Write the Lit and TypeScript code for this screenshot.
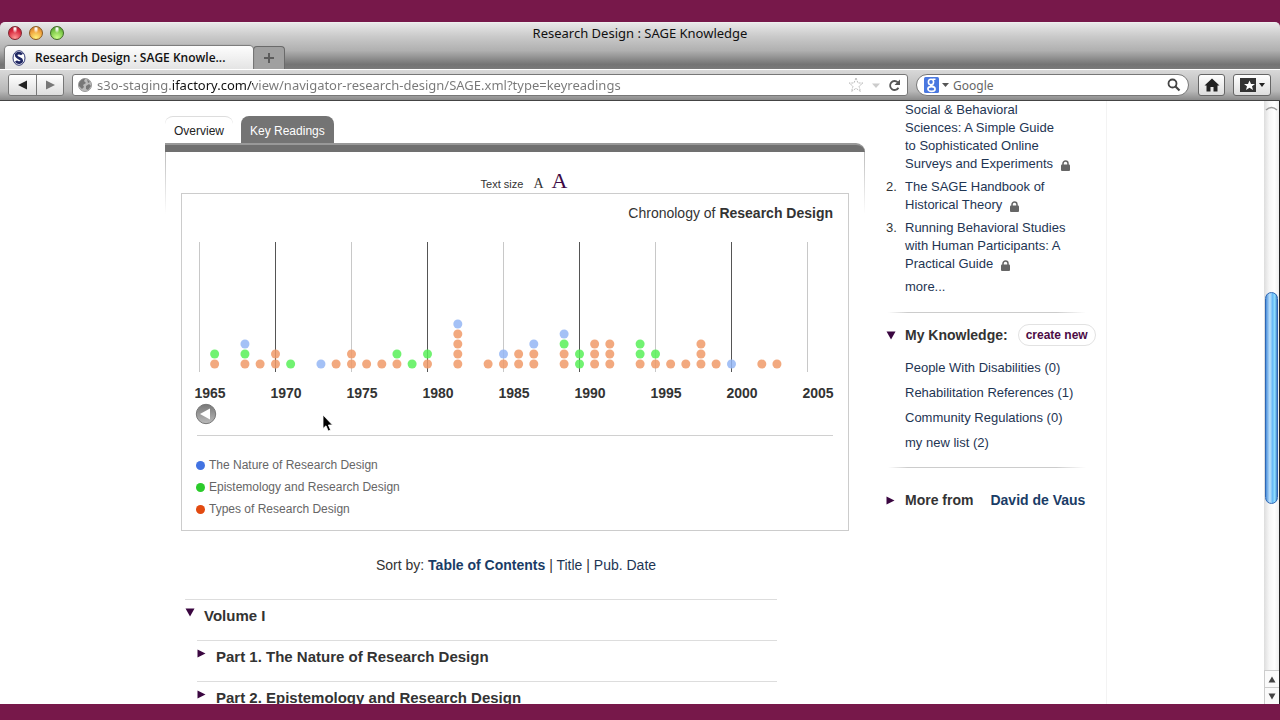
import { LitElement, html, svg, css } from "lit";
import { customElement } from "lit/decorators.js";

type Series = "nature" | "epistemology" | "types";

const CODES: Record<string, Series> = { B: "nature", G: "epistemology", O: "types" };

// One entry per year; letters are stacked from the axis upwards.
const READINGS: [number, string][] = [
  [1966, "OG"], [1968, "OGB"], [1969, "O"], [1970, "OO"], [1971, "G"], [1973, "B"],
  [1974, "O"], [1975, "OO"], [1976, "O"], [1977, "O"], [1978, "OG"], [1979, "G"],
  [1980, "OG"], [1982, "OOOOB"], [1984, "O"], [1985, "OB"], [1986, "OO"], [1987, "OOB"],
  [1989, "OOGB"], [1990, "GG"], [1991, "OOO"], [1992, "OOO"], [1994, "OGG"], [1995, "OG"],
  [1996, "O"], [1997, "O"], [1998, "OOO"], [1999, "O"], [2000, "B"], [2002, "O"], [2003, "O"],
];

const YEARS = [1965, 1970, 1975, 1980, 1985, 1990, 1995, 2000, 2005];
const xOf = (year: number) => 2.5 + (year - 1965) * 15.15 + Math.floor((year - 1965) / 5) * 0.25;

@customElement("chronology-chart")
export class ChronologyChart extends LitElement {
  static styles = css`
    :host { display: block; border: 1px solid #ccc; padding: 11px 15px 10px; font-size: 14px; color: #333; }
    .title { margin: 0; font-size: 14px; line-height: 16px; font-weight: normal; text-align: right; }
    .plot { display: block; width: 100%; margin-top: 21px; overflow: visible; }
    .tick { stroke: #c8c8c8; }
    .decade { stroke: #555; }
    .year { font: bold 14px "Liberation Sans", Arial, sans-serif; fill: #333; }
    .nature { fill: #94b6f4; background: #4273e2; }
    .epistemology { fill: #58f058; background: #2bcb2b; }
    .types { fill: #f09a68; background: #e24a10; }
    .dot { opacity: 0.85; }
    .prev { display: block; width: 22px; height: 22px; margin: 1px 0 10px -2px; padding: 0; border: 0; background: none; }
    .legend { list-style: none; margin: 0; padding: 18px 0 0; border-top: 1px solid #d0d0d0; color: #666; font-size: 12px; line-height: 22px; }
    .entry { display: flex; align-items: center; gap: 4px; }
    .swatch { width: 9px; height: 9px; border-radius: 50%; margin-left: -1px; }
  `;

  render() {
    return html`
      <h2 class="title">Chronology of <b>Research Design</b></h2>
      <svg class="plot" viewBox="0 0 636 160" role="img" aria-label="Readings by year">
        ${YEARS.map((y) => svg`<line class=${y % 10 ? "tick" : "decade"} x1=${xOf(y)} x2=${xOf(y)} y1="0" y2="130"/>
          <text class="year" x=${xOf(y) - 5} y="156">${y}</text>`)}
        ${READINGS.map(([y, stack]) =>
          [...stack].map((c, i) => svg`<circle class="dot ${CODES[c]}" cx=${xOf(y)} cy=${122 - i * 10} r="4.5"/>`))}
      </svg>
      <button class="prev" aria-label="Earlier years">
        <svg width="22" height="22" viewBox="0 0 22 22">
          <defs><linearGradient id="g" x2="0" y2="1"><stop stop-color="#777"/><stop offset="1" stop-color="#bbb"/></linearGradient></defs>
          <circle cx="11" cy="11" r="9.7" fill="url(#g)" stroke="#777"/>
          <path d="M5 11 15 5.5V16.5Z" fill="#fff"/>
        </svg>
      </button>
      <ul class="legend">
        <li class="entry"><span class="swatch nature"></span>The Nature of Research Design</li>
        <li class="entry"><span class="swatch epistemology"></span>Epistemology and Research Design</li>
        <li class="entry"><span class="swatch types"></span>Types of Research Design</li>
      </ul>
    `;
  }
}

@customElement("browser-chrome")
export class BrowserChrome extends LitElement {
  static styles = css`
    :host { display: block; font-family: "Noto Sans", "Open Sans", sans-serif; color: #111; }
    .top { background: linear-gradient(#e8e8e8, #c9c9c9 30%, #b0b0b0 60%, #888 80%, #747474 90%, #7a7a7a); border-radius: 5px 5px 0 0; border-top: 1px solid #eee; box-sizing: border-box; }
    .titlebar { display: grid; grid-template-columns: 1fr auto 1fr; align-items: start; height: 23px; padding: 0 8px; box-sizing: border-box; }
    .lights { display: flex; gap: 7px; padding-top: 3px; }
    .light { width: 14px; height: 14px; padding: 0; border: 1px solid #555; border-radius: 50%; }
    .close { border-color: #7d2530; background: radial-gradient(ellipse at 50% 15%, #fff 5%, transparent 30%), radial-gradient(circle at 50% 90%, #ff9a96, #d8283e 60%, #a01828); }
    .min { border-color: #8a5a20; background: radial-gradient(ellipse at 50% 15%, #fff 5%, transparent 30%), radial-gradient(circle at 50% 90%, #fff27a, #efa03c 60%, #b06a20); }
    .max { border-color: #3e6a24; background: radial-gradient(ellipse at 50% 15%, #fff 5%, transparent 30%), radial-gradient(circle at 50% 90%, #ccff8a, #7cc848 60%, #3f8428); }
    .title { font-size: 13px; line-height: 20px; }
    .tabs { display: flex; height: 23px; padding-left: 5px; }
    .tab { display: flex; align-items: center; gap: 9px; width: 248px; box-sizing: border-box; padding: 0 8px 0 7px; border: 0; border-radius: 4px 4px 0 0; background: linear-gradient(#fdfdfd, #e4e4e4); font: 600 12px "Open Sans", "Noto Sans", sans-serif; color: #111; box-shadow: 0 0 1px 1px #777; clip-path: inset(-2px -2px 0 -2px); white-space: nowrap; }
    .new { display: flex; align-items: center; justify-content: center; width: 32px; padding: 0; border: 1px solid #6a6a6a; border-bottom: 0; border-radius: 4px 4px 0 0; background: #a0a0a0; }
    .toolbar { display: flex; align-items: center; height: 32px; box-sizing: border-box; padding: 0 9px 0 8px; border-top: 1px solid #fff; border-bottom: 1px solid #444; background: linear-gradient(#d8d8d8, #b8b8b8 70%, #8a8a8a); }
    .group { display: flex; border: 1px solid #777; border-radius: 3px; overflow: hidden; }
    .nav, .tool { display: flex; align-items: center; justify-content: center; gap: 3px; height: 20px; padding: 0; border: 0; background: linear-gradient(#fff, #ddd); }
    .nav { width: 27px; }
    .nav + .nav { border-left: 1px solid #777; }
    .tool { width: 27px; height: 22px; border: 1px solid #666; border-radius: 3px; margin-left: 9px; }
    .wide { width: 38px; margin-left: 8px; }
    .field { display: flex; align-items: center; box-sizing: border-box; height: 22px; background: #fff; border: 1px solid #777; }
    .address { flex: 1; margin-left: 8px; padding: 0 6px 0 5px; border-radius: 3px; gap: 5px; }
    .search { width: 273px; margin-left: 8px; padding: 0 7px; border-radius: 11px; gap: 3px; }
    .icon { display: flex; padding: 0; border: 0; background: none; }
    .input { flex: 1; min-width: 0; height: 20px; padding: 0; border: 0; outline: 0; font: 12px "Noto Sans", sans-serif; color: #666; background: none; }
    .input::placeholder { color: #666; opacity: 1; }
    .url { font-size: 13px; color: transparent; background: linear-gradient(90deg, #777 75px, #111 75px 156px, #777 156px); -webkit-background-clip: text; background-clip: text; }
    .hint { margin-left: 3px; }
  `;

  render() {
    return html`
      <header>
        <div class="top">
          <div class="titlebar">
            <div class="lights">
              <button class="light close" aria-label="Close"></button>
              <button class="light min" aria-label="Minimise"></button>
              <button class="light max" aria-label="Zoom"></button>
            </div>
            <div class="title">Research Design : SAGE Knowledge</div>
          </div>
          <div class="tabs">
            <button class="tab">
              <svg width="14" height="16" viewBox="0 0 14 16"><ellipse cx="7" cy="8" rx="6" ry="7.3" fill="#fff" stroke="#2b3370" /><path d="M10 4.5C8.5 2.5 4 2.6 4.2 5.5S9.8 8 9.8 10.5 5.500 13.500 4 11" fill="none" stroke="#1f2763" stroke-width="2.6"/></svg>
              Research Design : SAGE Knowle...
            </button>
            <button class="new" aria-label="New tab"><svg width="12" height="12" viewBox="0 0 12 12"><path d="M6 1V11M1 6H11" stroke="#5c5c5c" stroke-width="2"/></svg></button>
          </div>
        </div>
        <div class="toolbar">
          <div class="group">
            <button class="nav" aria-label="Back"><svg width="10" height="10" viewBox="0 0 10 10"><path d="M0 5 9 .5V9.500Z" fill="#222"/></svg></button>
            <button class="nav" aria-label="Forward"><svg width="10" height="10" viewBox="0 0 10 10"><path d="M10 5 1 .5V9.500Z" fill="#777"/></svg></button>
          </div>
          <div class="field address">
            <svg width="14" height="14" viewBox="0 0 14 14"><circle cx="7" cy="7" r="6.500" fill="#bbb" stroke="#999"/><path d="M1 5C3 1 6 .5 7 1L6 3 8 5 5 7 6 9 4 11 1 8ZM8 8 11 6 13 8 10 12 8 11ZM9 1 12 4 10 5Z" fill="#777"/></svg>
            <input class="input url" aria-label="Address" value="s3o-staging.ifactory.com/view/navigator-research-design/SAGE.xml?type=keyreadings" />
            <button class="icon" aria-label="Bookmark"><svg width="16" height="16" viewBox="0 0 16 16"><path d="M8 1 10 6H15L11 9.200 12.500 14.500 8 11.300 3.500 14.500 5 9.200 1 6H6Z" fill="#fff" stroke="#bbb" stroke-dasharray="2 1"/></svg></button>
            <button class="icon hint" aria-label="History"><svg width="8" height="5" viewBox="0 0 8 5"><path d="M0 .5H8L4 5Z" fill="#ccc"/></svg></button>
            <button class="icon hint" aria-label="Reload"><svg width="13" height="13" viewBox="0 0 13 13"><path d="M9.800 3.300A4.500 4.500 0 1 0 10.500 8.800" fill="none" stroke="#555" stroke-width="1.800"/><path d="M12 .5V6H6.500Z" fill="#555"/></svg></button>
          </div>
          <div class="field search">
            <button class="icon" aria-label="Search engine"><svg width="26" height="16" viewBox="0 0 26 16"><rect width="15" height="16" rx="1.500" fill="#4a78e0"/><g fill="none" stroke="#fff" stroke-width="1.600"><ellipse cx="7" cy="5" rx="2.600" ry="2.700"/><ellipse cx="7.500" cy="12" rx="3.600" ry="2.400"/><path d="M8.500 2.300H11.500M7.500 7.500C5 9 10 9 9.500 10"/></g><path d="M18 6H25L21.500 10Z" fill="#555"/></svg></button>
            <input class="input" type="text" aria-label="Search" placeholder="Google" />
            <button class="icon" aria-label="Search"><svg width="14" height="14" viewBox="0 0 14 14"><circle cx="5.500" cy="5.500" r="4" fill="none" stroke="#444" stroke-width="1.800"/><path d="M8.500 8.500 12.500 12.500" stroke="#444" stroke-width="2.200"/></svg></button>
          </div>
          <button class="tool" aria-label="Home"><svg width="16" height="14" viewBox="0 0 16 14"><path d="M8 .5 15.500 7.500H13.500V13.500H9.500V9H6.500V13.500H2.500V7.500H.5Z" fill="#222"/></svg></button>
          <button class="tool wide" aria-label="Bookmarks"><svg width="16" height="14" viewBox="0 0 16 14"><path d="M0 0H16V14H0Z" fill="#333"/><path d="M9.500 2.500 11 6H15L12 8.200 13 12 9.500 9.800 6 12 7 8.200 4 6H8Z" fill="#fff"/></svg><svg width="6" height="4" viewBox="0 0 6 4"><path d="M0 0H6L3 4Z" fill="#222"/></svg></button>
        </div>
      </header>
    `;
  }
}

@customElement("app-root")
export class AppRoot extends LitElement {
  static styles = css`
    :host { display: flex; flex-direction: column; height: 100vh; box-sizing: border-box; padding: 22px 0 16px; background: #77184a; font-family: "Liberation Sans", Arial, sans-serif; font-size: 14px; color: #333; position: relative; overflow: hidden; }
    .view { flex: 1; min-height: 0; display: flex; background: #fff; border-right: 1px solid #222; }
    .page { flex: 1; min-width: 0; overflow: hidden; }
    .wrap { display: flex; gap: 21px; max-width: 942px; margin: 0 auto; padding-left: 8px; }
    a { color: #1e3553; text-decoration: none; }
    .main { flex: 1; min-width: 0; }
    .tabs { display: flex; align-items: flex-end; gap: 8px; padding-top: 15px; font-size: 12px; line-height: 24px; }
    .tab { padding: 3px 9px 0; }
    .plain { color: #222; border-radius: 8px 8px 0 0; border-top: 1px solid #ddd; line-height: 23px; }
    .current { background: #747474; color: #fff; border-radius: 8px 8px 0 0; }
    .bar { height: 7px; background: #707070; border-top: 2px solid #999; border-radius: 0 9px 0 0; }
    .panel { padding: 0 16px; background: linear-gradient(#bbb, #fff) left top / 1px 62px no-repeat, linear-gradient(#bbb, #fff) right top / 1px 62px no-repeat; }
    .sizes { display: flex; align-items: baseline; justify-content: center; gap: 8px; height: 41px; box-sizing: border-box; padding: 17px 0 0 18px; font-size: 11px; }
    .size { border: 0; padding: 0; background: none; font-family: "Liberation Serif", serif; color: #333; line-height: 24px; }
    .small { font-size: 14px; margin-left: 2px; }
    .large { font-size: 22px; color: #3d0a45; }
    .sort { margin: 25px 0 25px; padding-left: 2px; text-align: center; line-height: 18px; }
    .strong { font-weight: bold; color: #1a3c66; }
    .toc { margin: 0 72px 0 4px; }
    .row { display: flex; align-items: center; gap: 9px; width: 100%; height: 41px; box-sizing: border-box; padding: 0 0 10px; border: 0; border-top: 1px solid #ddd; background: none; font: bold 15px "Liberation Sans", Arial, sans-serif; color: #333; text-align: left; }
    .nested { margin-left: 12px; }
    .row .mark { margin-bottom: 6px; }
    .mark { flex: none; }
    .side { width: 210px; line-height: 18px; font-size: 13px; border-right: 1px solid #f3f3f3; padding-right: 10px; min-height: 419px; }
    .list { list-style: none; margin: 0; padding: 0 29px 0 0; display: grid; gap: 5px; }
    .item { display: grid; grid-template-columns: 14px 1fr; gap: 5px; }
    .lock { margin: 0 -5px 0 4px; vertical-align: -3px; }
    .more { display: block; margin: 5px 0 16px 19px; }
    .rule { height: 1px; border: 0; margin: 0 10px 0 2px; background: linear-gradient(90deg, #fff, #ccc 10% 85%, #fff); }
    .head { display: flex; align-items: center; margin: 0; font-size: 14px; font-weight: bold; line-height: 22px; white-space: nowrap; }
    .know { padding-top: 11px; }
    .from { padding-top: 21px; }
    .toggle { display: flex; flex: none; width: 19px; padding: 0; border: 0; background: none; }
    .create { margin-left: 10px; padding: 0 7px; height: 22px; border: 1px solid #e2e2e2; border-radius: 11px; background: #fff; color: #4c0b45; font: bold 12px "Liberation Sans", Arial, sans-serif; white-space: nowrap; }
    .mine { list-style: none; margin: 0; padding: 9px 0 12px 19px; line-height: 25px; }
    .author { margin-left: 17px; }
    .scroll { width: 15px; display: flex; flex-direction: column; background: linear-gradient(90deg, #ddd, #f6f6f6 35%, #fff 70%, #eee); }
    .cap { flex: none; display: block; }
    .before { flex: 178; }
    .thumb { flex: 210; margin: 0 1px; border-radius: 7px; box-sizing: border-box; border: 1px solid #2f68b4; background: linear-gradient(90deg, #4c90dc, #bfe3fc 35%, #66b8f6 60%, #8fe0ff 80%, #3f80c8); }
    .after { flex: 167; }
    .step { display: flex; align-items: center; justify-content: center; height: 17px; padding: 0; border: 0; border-top: 1px solid #ccc; border-left: 1px solid #ccc; background: #fafafa; }
    .pointer { position: absolute; left: 322px; top: 414px; }
  `;

  private lock() {
    return html`<svg class="lock" width="9" height="11" viewBox="0 0 9 11" aria-label="Locked"><path d="M2 5V3.500A2.500 2.500 0 0 1 7 3.500V5" fill="none" stroke="#666" stroke-width="1.500"/><rect y="4.500" width="9" height="6.500" rx="1" fill="#666"/></svg>`;
  }

  private down() {
    return html`<svg class="mark" width="10" height="9" viewBox="0 0 10 9"><path d="M.5 .5H9.500L5 8.500Z" fill="#3a0640"/></svg>`;
  }

  private right() {
    return html`<svg class="mark" width="10" height="9" viewBox="0 0 10 9"><path d="M.5 .5V8.500L8.500 4.500Z" fill="#3a0640"/></svg>`;
  }

  render() {
    return html`
      <browser-chrome></browser-chrome>
      <div class="view">
        <div class="page">
          <div class="wrap">
            <main class="main">
              <nav class="tabs">
                <a class="tab plain" href="#overview">Overview</a>
                <a class="tab current" href="#readings" aria-current="page">Key Readings</a>
              </nav>
              <div class="bar"></div>
              <div class="panel">
                <div class="sizes">
                  <span>Text size</span>
                  <button class="size small" aria-label="Normal text">A</button>
                  <button class="size large" aria-label="Large text">A</button>
                </div>
                <chronology-chart></chronology-chart>
                <p class="sort">Sort by: <a class="strong" href="#toc">Table of Contents</a> | <a href="#title">Title</a> | <a href="#date">Pub. Date</a></p>
                <div class="toc">
                  <button class="row" aria-expanded="true">${this.down()}Volume I</button>
                  <div class="nested">
                    <button class="row" aria-expanded="false">${this.right()}Part 1. The Nature of Research Design</button>
                    <button class="row" aria-expanded="false">${this.right()}Part 2. Epistemology and Research Design</button>
                  </div>
                </div>
              </div>
            </main>
            <aside class="side">
              <ol class="list">
                <li class="item"><span></span><a href="#r1">Social &amp; Behavioral Sciences: A Simple Guide to Sophisticated Online Surveys and Experiments ${this.lock()}</a></li>
                <li class="item"><span>2.</span><a href="#r2">The SAGE Handbook of Historical Theory ${this.lock()}</a></li>
                <li class="item"><span>3.</span><a href="#r3">Running Behavioral Studies with Human Participants: A Practical Guide ${this.lock()}</a></li>
              </ol>
              <a class="more" href="#more">more...</a>
              <hr class="rule" />
              <section>
                <h3 class="head know"><button class="toggle" aria-label="Collapse My Knowledge">${this.down()}</button>My Knowledge:<button class="create">create new</button></h3>
                <ul class="mine">
                  <li><a href="#l1">People With Disabilities (0)</a></li>
                  <li><a href="#l2">Rehabilitation References (1)</a></li>
                  <li><a href="#l3">Community Regulations (0)</a></li>
                  <li><a href="#l4">my new list (2)</a></li>
                </ul>
              </section>
              <hr class="rule" />
              <h3 class="head from"><button class="toggle" aria-label="Expand More from">${this.right()}</button>More from<a class="author strong" href="#author">David de Vaus</a></h3>
            </aside>
          </div>
        </div>
        <div class="scroll">
          <svg class="cap" width="15" height="14" viewBox="0 0 15 14"><path d="M2 9Q7.500 4 13 9" fill="none" stroke="#999" stroke-width="1.500"/></svg>
          <div class="before"></div>
          <div class="thumb"></div>
          <div class="after"></div>
          <button class="step" aria-label="Scroll up"><svg width="8" height="7" viewBox="0 0 8 7"><path d="M4 .5 7.500 6.500H.5Z" fill="#444"/></svg></button>
          <button class="step" aria-label="Scroll down"><svg width="8" height="7" viewBox="0 0 8 7"><path d="M4 6.500 7.500 .5H.5Z" fill="#444"/></svg></button>
        </div>
      </div>
      <svg class="pointer" width="12" height="19" viewBox="0 0 12 19"><path d="M1 1V14.500L4 11.800 6.200 17 8.600 16 6.400 11H10.500Z" fill="#000" stroke="#fff" stroke-width=".8"/></svg>
    `;
  }
}
